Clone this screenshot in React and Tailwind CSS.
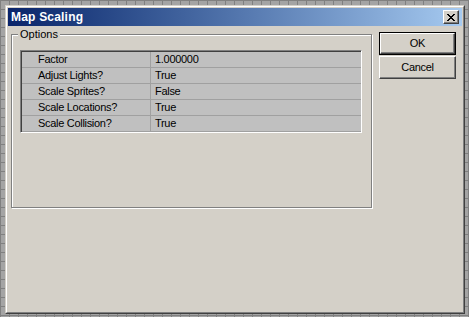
import React from "react";

const rows = [
  ["Factor", "1.000000"],
  ["Adjust Lights?", "True"],
  ["Scale Sprites?", "False"],
  ["Scale Locations?", "True"],
  ["Scale Collision?", "True"],
];

function CloseGlyph() {
  const px = [
    [0, 0], [1, 0], [6, 0], [7, 0],
    [1, 1], [2, 1], [5, 1], [6, 1],
    [2, 2], [3, 2], [4, 2], [5, 2],
    [3, 3], [4, 3],
    [2, 4], [3, 4], [4, 4], [5, 4],
    [1, 5], [2, 5], [5, 5], [6, 5],
    [0, 6], [1, 6], [6, 6], [7, 6],
  ];
  return (
    <svg width="8" height="7" viewBox="0 0 8 7" shapeRendering="crispEdges">
      {px.map(([x, y], i) => (
        <rect key={i} x={x} y={y} width="1" height="1" fill="#000" />
      ))}
    </svg>
  );
}

export default function App() {
  return (
    <div className="w-[469px] h-[317px] overflow-hidden bg-[#a4a4a4] bg-[linear-gradient(#808080_1px,transparent_1px),linear-gradient(90deg,#808080_1px,transparent_1px)] bg-[size:9px_9px] pt-[5px] pl-[5px] font-['Liberation_Sans',Arial,sans-serif] text-[11px] text-black">
      <div className="w-[460px] h-[309px] border border-t-[#d4d0c8] border-l-[#d4d0c8] border-b-[#404040] border-r-[#404040] bg-[#d4d0c8]">
        <div className="h-full border border-t-white border-l-white border-b-[#808080] border-r-[#808080] p-[1px] flex flex-col">
          <div className="h-[18px] flex items-center justify-between bg-gradient-to-r from-[#0a246a] to-[#a6caf0] pl-[3px] pr-[3px]">
            <span className="text-white font-bold text-[12px] leading-[18px] tracking-[0.2px]">Map Scaling</span>
            <div className="w-[16px] h-[14px] flex items-center justify-center bg-[#d4d0c8] border border-t-white border-l-white border-b-[#404040] border-r-[#404040] shadow-[inset_-1px_-1px_#808080]">
              <CloseGlyph />
            </div>
          </div>
          <div className="flex pl-[3px]">
            <div className="relative mt-[8px] w-[361px] h-[174px] border border-[#808080] shadow-[inset_1px_1px_#fff,1px_1px_#fff] pt-[15px] pl-[8px]">
              <span className="absolute left-[6px] top-[-7px] bg-[#d4d0c8] px-[2px] leading-[13px]">Options</span>
              <div className="w-[342px] border border-t-[#808080] border-l-[#808080] border-b-white border-r-white">
                <div className="border-t border-l border-[#404040] bg-[#c0c0c0]">
                  {rows.map(([k, v]) => (
                    <div key={k} className="flex h-[16px] border-b border-[#a0a0a0] leading-[15px] tracking-[-0.3px]">
                      <div className="w-[129px] border-r border-[#a0a0a0] pl-[16px]">{k}</div>
                      <div className="pl-[4px]">{v}</div>
                    </div>
                  ))}
                </div>
              </div>
            </div>
            <div className="ml-[7px] mt-[6px] flex flex-col gap-[1px]">
              <div className="w-[77px] h-[23px] border border-black">
                <div className="h-full flex items-center justify-center border border-t-white border-l-white border-b-[#404040] border-r-[#404040] shadow-[inset_-1px_-1px_#808080] tracking-[-0.2px]">
                  OK
                </div>
              </div>
              <div className="w-[77px] h-[23px] flex items-center justify-center border border-t-white border-l-white border-b-[#404040] border-r-[#404040] shadow-[inset_-1px_-1px_#808080] tracking-[-0.3px]">
                Cancel
              </div>
            </div>
          </div>
        </div>
      </div>
    </div>
  );
}
